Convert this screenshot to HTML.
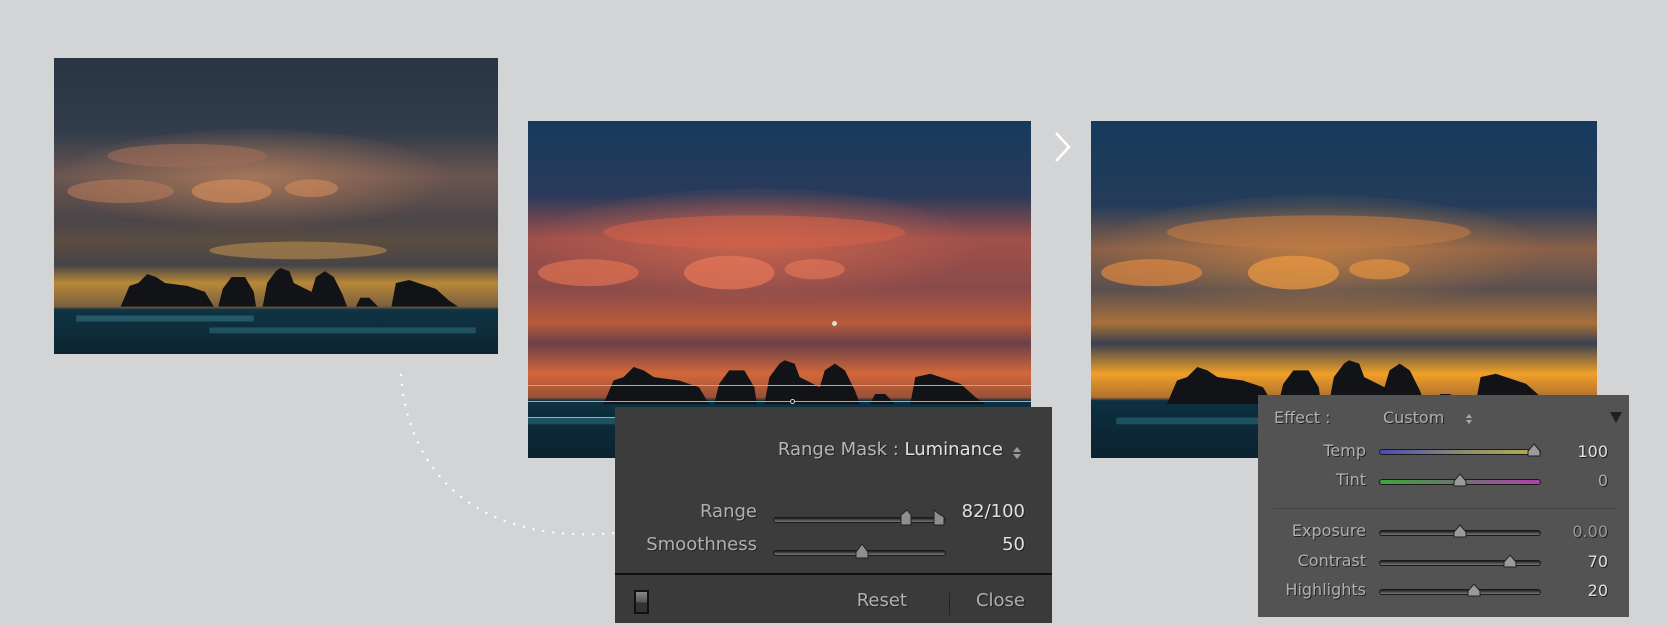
<!DOCTYPE html>
<html><head><meta charset="utf-8"><style>
*{margin:0;padding:0;box-sizing:border-box}
body{width:1667px;height:626px;background:#d3d4d6;position:relative;overflow:hidden;font-family:"DejaVu Sans","Liberation Sans",sans-serif}
.abs{position:absolute}
.photo{position:absolute;overflow:hidden}
.photo svg{display:block;width:100%;height:100%}
.p1{left:615px;top:407px;width:437px;height:216px;background:#3c3c3c}
.p2{left:1258px;top:395px;width:371px;height:222px;background:#535353}
.lbl{position:absolute;text-align:right;color:#aeb0b2;text-shadow:1px 1px 0 #222;white-space:nowrap}
.val{position:absolute;text-align:right;color:#dfe1e3;text-shadow:1px 1px 0 #222;white-space:nowrap}
.track{position:absolute;height:6px;border-radius:3px;background:linear-gradient(#1c1c1c,#555 60%,#777);border:1px solid #1a1a1a}
.p1 .lbl,.p1 .val{font-size:18px}
.p2 .lbl,.p2 .val{font-size:16px}
</style></head><body>

<!-- Image 1 -->
<div class="photo" style="left:54px;top:58px;width:444px;height:296px">
<svg viewBox="0 0 100 100" preserveAspectRatio="none">
<defs>
<linearGradient id="s1" x1="0" y1="0" x2="0" y2="1">
<stop offset="0" stop-color="#2a3544"/><stop offset=".25" stop-color="#323c4b"/>
<stop offset=".4" stop-color="#6a5550"/><stop offset=".55" stop-color="#4c4548"/>
<stop offset=".62" stop-color="#5a4c40"/><stop offset=".7" stop-color="#464447"/>
<stop offset=".76" stop-color="#b88838"/><stop offset=".84" stop-color="#7a6040"/>
<stop offset=".85" stop-color="#0f3444"/><stop offset="1" stop-color="#0c2430"/></linearGradient>
<radialGradient id="g1" cx=".5" cy=".45" r=".5"><stop offset="0" stop-color="#d59060" stop-opacity=".55"/><stop offset="1" stop-color="#d59060" stop-opacity="0"/></radialGradient>
</defs>
<rect width="100" height="100" fill="url(#s1)"/>
<ellipse cx="45" cy="42" rx="45" ry="18" fill="url(#g1)"/>
<ellipse cx="15" cy="45" rx="12" ry="4" fill="#b57a58" opacity=".6"/>
<ellipse cx="40" cy="45" rx="9" ry="4" fill="#d08a5a" opacity=".7"/>
<ellipse cx="58" cy="44" rx="6" ry="3" fill="#d08a5a" opacity=".6"/>
<ellipse cx="30" cy="33" rx="18" ry="4" fill="#9e6c58" opacity=".6"/>
<ellipse cx="55" cy="65" rx="20" ry="3" fill="#d09a50" opacity=".5"/>
<polygon fill="#111316" points="15,84 17,77 19,76 21,73 23,74 25,76 30,77 34,79 36,84 37,84 38,78 40,74 43,74 45,79 45.5,84 47,84 48,76 50,72 51,71 53,72 54,76 58,79 59,74 61,72 63,74 65,80 66,84 68,84 69,81 71,81 73,84 76,84 77,76 80,75 86,78 89,82 91,84"/>
<rect x="5" y="87" width="40" height="2" fill="#2d6b7a" opacity=".7"/>
<rect x="35" y="91" width="60" height="2" fill="#2d6b7a" opacity=".6"/>
</svg></div>

<!-- Image 2 -->
<div class="photo" style="left:528px;top:121px;width:503px;height:337px">
<svg viewBox="0 0 100 100" preserveAspectRatio="none">
<defs>
<linearGradient id="s2" x1="0" y1="0" x2="0" y2="1">
<stop offset="0" stop-color="#163a5c"/><stop offset=".22" stop-color="#2a3a5a"/>
<stop offset=".35" stop-color="#a0504a"/><stop offset=".5" stop-color="#8a4a4a"/>
<stop offset=".6" stop-color="#b85a3a"/><stop offset=".66" stop-color="#6a4048"/>
<stop offset=".75" stop-color="#d2683a"/><stop offset=".82" stop-color="#9a5038"/>
<stop offset=".83" stop-color="#0d3040"/><stop offset="1" stop-color="#0b2230"/></linearGradient>
<radialGradient id="g2" cx=".5" cy=".45" r=".5"><stop offset="0" stop-color="#e07050" stop-opacity=".6"/><stop offset="1" stop-color="#e07050" stop-opacity="0"/></radialGradient>
</defs>
<rect width="100" height="100" fill="url(#s2)"/>
<ellipse cx="45" cy="38" rx="45" ry="18" fill="url(#g2)"/>
<ellipse cx="12" cy="45" rx="10" ry="4" fill="#e07050" opacity=".7"/>
<ellipse cx="40" cy="45" rx="9" ry="5" fill="#e87858" opacity=".7"/>
<ellipse cx="57" cy="44" rx="6" ry="3" fill="#e87858" opacity=".6"/>
<ellipse cx="45" cy="33" rx="30" ry="5" fill="#d0604a" opacity=".6"/>
<polygon fill="#111316" points="15,84 17,77 19,76 21,73 23,74 25,76 30,77 34,79 36,84 37,84 38,78 40,74 43,74 45,79 45.5,84 47,84 48,76 50,72 51,71 53,72 54,76 58,79 59,74 61,72 63,74 65,80 66,84 68,84 69,81 71,81 73,84 76,84 77,76 80,75 86,78 89,82 91,84"/>
<rect x="0" y="88" width="40" height="2" fill="#2d6b7a" opacity=".6"/>
</svg>
<div class="abs" style="left:0;top:264px;width:503px;height:1px;background:#aaa"></div>
<div class="abs" style="left:0;top:280px;width:503px;height:1px;background:#aaa"></div>
<div class="abs" style="left:0;top:296px;width:503px;height:1px;background:#aaa"></div>
<div class="abs" style="left:304px;top:200px;width:5px;height:5px;border-radius:50%;background:#ddd"></div>
<div class="abs" style="left:262px;top:278px;width:5px;height:5px;border-radius:50%;border:1px solid #ddd;background:#111"></div>
</div>

<!-- arrow -->
<svg class="abs" style="left:1052px;top:131px" width="22" height="32"><polyline points="4,2 17,16 4,30" fill="none" stroke="#fff" stroke-width="2.5"/></svg>

<!-- Image 3 -->
<div class="photo" style="left:1091px;top:121px;width:506px;height:337px">
<svg viewBox="0 0 100 100" preserveAspectRatio="none">
<defs>
<linearGradient id="s3" x1="0" y1="0" x2="0" y2="1">
<stop offset="0" stop-color="#163a5c"/><stop offset=".25" stop-color="#243c5a"/>
<stop offset=".38" stop-color="#8a6048"/><stop offset=".5" stop-color="#5a5050"/>
<stop offset=".6" stop-color="#a8703a"/><stop offset=".66" stop-color="#3a4050"/>
<stop offset=".75" stop-color="#f0a028"/><stop offset=".82" stop-color="#b07030"/>
<stop offset=".83" stop-color="#0d3040"/><stop offset="1" stop-color="#0b2230"/></linearGradient>
<radialGradient id="g3" cx=".5" cy=".45" r=".5"><stop offset="0" stop-color="#e09040" stop-opacity=".55"/><stop offset="1" stop-color="#e09040" stop-opacity="0"/></radialGradient>
</defs>
<rect width="100" height="100" fill="url(#s3)"/>
<ellipse cx="45" cy="40" rx="45" ry="18" fill="url(#g3)"/>
<ellipse cx="12" cy="45" rx="10" ry="4" fill="#e08840" opacity=".7"/>
<ellipse cx="40" cy="45" rx="9" ry="5" fill="#f09a40" opacity=".7"/>
<ellipse cx="57" cy="44" rx="6" ry="3" fill="#f09a40" opacity=".6"/>
<ellipse cx="45" cy="33" rx="30" ry="5" fill="#c07a44" opacity=".6"/>
<polygon fill="#111316" points="15,84 17,77 19,76 21,73 23,74 25,76 30,77 34,79 36,84 37,84 38,78 40,74 43,74 45,79 45.5,84 47,84 48,76 50,72 51,71 53,72 54,76 58,79 59,74 61,72 63,74 65,80 66,84 68,84 69,81 71,81 73,84 76,84 77,76 80,75 86,78 89,82 91,84"/>
<rect x="5" y="88" width="30" height="2" fill="#2d6b7a" opacity=".6"/>
</svg></div>

<!-- dotted curve -->
<svg class="abs" style="left:0;top:0" width="1667" height="626"><path d="M401,375 C408,475 480,545 616,533" fill="none" stroke="#fff" stroke-width="2.4" stroke-linecap="round" stroke-dasharray="0 10"/></svg>

<!-- Panel 1 -->
<div class="p1 abs">
 <div class="lbl" style="right:49px;top:32px;color:#b4b6b8">Range Mask : <span style="color:#e0e2e4">Luminance</span></div>
 <svg class="abs" style="left:397px;top:38px" width="10" height="16"><path d="M1,7 L5,2 L9,7Z M1,9 L5,14 L9,9Z" fill="#9a9a9a"/></svg>
 <div class="lbl" style="right:295px;top:94px">Range</div>
 <div class="lbl" style="right:295px;top:127px">Smoothness</div>
 <div class="val" style="right:27px;top:94px">82/100</div>
 <div class="val" style="right:27px;top:127px">50</div>
 <div class="track" style="left:158px;top:110px;width:173px"></div>
 <div class="track" style="left:158px;top:143px;width:173px"></div>
 <svg class="abs" style="left:283px;top:102px" width="16" height="18"><path d="M3,16 L3,6 L9,1 L13,6 L13,16Z" fill="#8e8e8e" stroke="#222"/></svg>
 <svg class="abs" style="left:316px;top:102px" width="16" height="18"><path d="M3,16 L3,1 L8,5 L13,8 L13,16Z" fill="#8e8e8e" stroke="#222"/></svg>
 <svg class="abs" style="left:239px;top:135px" width="16" height="18"><path d="M2,16 L2,10 L8,2 L14,10 L14,16Z" fill="#8e8e8e" stroke="#222"/></svg>
 <div class="abs" style="left:0;top:166px;width:437px;height:2px;background:#111"></div>
 <div class="abs" style="left:0;top:168px;width:437px;height:48px;background:#3a3a3a"></div>
 <div class="abs" style="left:19px;top:183px;width:15px;height:24px;border:2px solid #111;background:linear-gradient(#8a8a8a,#555 50%,#333 55%,#333)"></div>
 <div class="lbl" style="right:145px;top:183px">Reset</div>
 <div class="abs" style="left:334px;top:186px;width:1px;height:22px;background:#222"></div>
 <div class="lbl" style="right:27px;top:183px">Close</div>
</div>

<!-- Panel 2 -->
<div class="p2 abs">
 <div class="lbl" style="left:16px;top:13px;text-align:left">Effect :</div>
 <div class="lbl" style="left:125px;top:13px;text-align:left">Custom</div>
 <svg class="abs" style="left:207px;top:17px" width="8" height="14"><path d="M1,6 L4,2 L7,6Z M1,8 L4,12 L7,8Z" fill="#aaa"/></svg>
 <svg class="abs" style="left:352px;top:17px" width="12" height="12"><path d="M0,0 L12,0 L6,11Z" fill="#1f1f1f"/></svg>
 <div class="lbl" style="right:263px;top:46px">Temp</div>
 <div class="lbl" style="right:263px;top:75px">Tint</div>
 <div class="abs" style="left:15px;top:113px;width:343px;height:1px;background:#444"></div>
 <div class="lbl" style="right:263px;top:126px">Exposure</div>
 <div class="lbl" style="right:263px;top:156px">Contrast</div>
 <div class="lbl" style="right:263px;top:185px">Highlights</div>
 <div class="val" style="right:21px;top:47px">100</div>
 <div class="val" style="right:21px;top:76px;color:#aaa">0</div>
 <div class="val" style="right:21px;top:127px;color:#999">0.00</div>
 <div class="val" style="right:21px;top:157px">70</div>
 <div class="val" style="right:21px;top:186px">20</div>
 <div class="track" style="left:121px;top:54px;width:162px;background:linear-gradient(90deg,#4a4ab8,#8a8a70 50%,#b8b050)"></div>
 <div class="track" style="left:121px;top:84px;width:162px;background:linear-gradient(90deg,#3aa83a,#707070 50%,#b040b0)"></div>
 <div class="track" style="left:121px;top:135px;width:162px"></div>
 <div class="track" style="left:121px;top:165px;width:162px"></div>
 <div class="track" style="left:121px;top:194px;width:162px"></div>
 <svg class="abs" style="left:268px;top:47px" width="16" height="16"><path d="M2,14 L2,9 L8,2 L14,9 L14,14Z" fill="#9a9a9a" stroke="#222"/></svg>
 <svg class="abs" style="left:194px;top:77px" width="16" height="16"><path d="M2,14 L2,9 L8,2 L14,9 L14,14Z" fill="#9a9a9a" stroke="#222"/></svg>
 <svg class="abs" style="left:194px;top:128px" width="16" height="16"><path d="M2,14 L2,9 L8,2 L14,9 L14,14Z" fill="#9a9a9a" stroke="#222"/></svg>
 <svg class="abs" style="left:244px;top:158px" width="16" height="16"><path d="M2,14 L2,9 L8,2 L14,9 L14,14Z" fill="#9a9a9a" stroke="#222"/></svg>
 <svg class="abs" style="left:208px;top:187px" width="16" height="16"><path d="M2,14 L2,9 L8,2 L14,9 L14,14Z" fill="#9a9a9a" stroke="#222"/></svg>
</div>
</body></html>
